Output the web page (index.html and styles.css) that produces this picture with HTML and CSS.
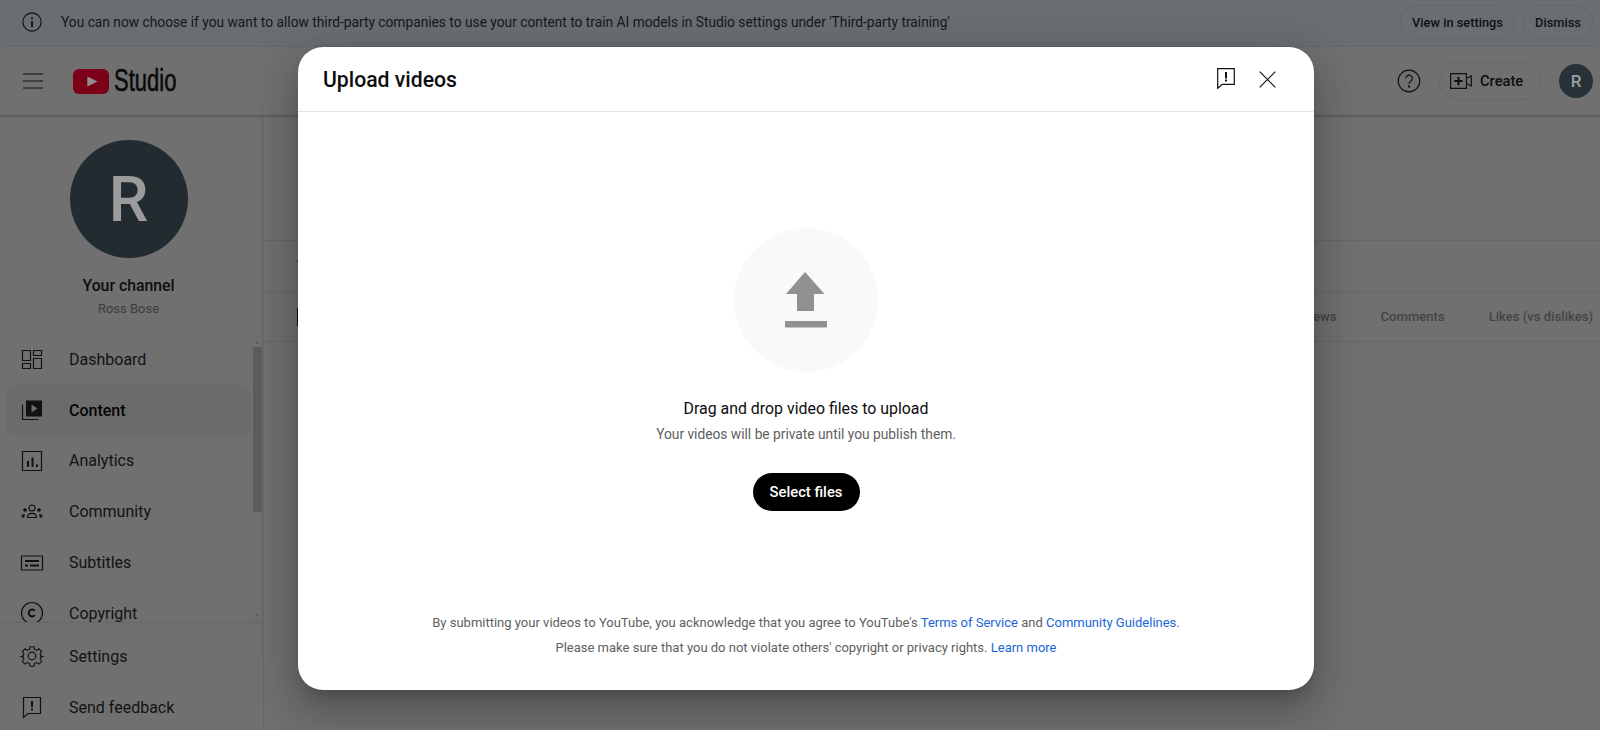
FILE: index.html
```html
<!DOCTYPE html>
<html lang="en">
<head>
<meta charset="utf-8">
<title>Channel content - YouTube Studio</title>
<link rel="stylesheet" href="styles.css">
</head>
<body>
<div class="page">
  <div class="banner">
    <svg class="banner-icon" viewBox="0 0 24 24"><circle cx="12" cy="12" r="10" class="line"/><path d="M11 11h2v6.500h-2zM11 7h2v2h-2z" class="solid"/></svg>
    <p class="banner-text">You can now choose if you want to allow third-party companies to use your content to train AI models in Studio settings under 'Third-party training'</p>
    <button class="pill banner-view">View in settings</button>
    <button class="pill banner-dismiss">Dismiss</button>
  </div>

  <header class="topbar">
    <svg class="menu-icon" viewBox="0 0 20 16"><path d="M0 1h20M0 8h20M0 15h20" class="line"/></svg>
    <svg class="logo-mark" viewBox="0 0 36 25"><rect width="36" height="25" rx="6" fill="#7c0018"/><path d="M14.300 7.500 24.500 12.500 14.300 17.500z" fill="#8f8f8f"/></svg>
    <span class="logo-text">Studio</span>
    <span class="spacer"></span>
    <svg class="help-icon" viewBox="0 0 24 24"><circle cx="12" cy="12" r="10.800" class="line"/><path d="M8.700 9.400a3.300 3.300 0 1 1 5.300 2.700c-1.200.9-2 1.500-2 3" class="line"/><path d="M11 16.600h2v2h-2z" class="solid"/></svg>
    <button class="create">
      <svg class="create-icon" viewBox="0 0 22 16"><path d="M.6.600h15.800v14.800H.6zM16.400 5.500l4.900-2.500v10l-4.900-2.500" class="line"/><path d="M8.500 3.800v8.400M4.300 8h8.400" class="line thick"/></svg>
      <span>Create</span>
    </button>
    <span class="avatar-small">R</span>
  </header>

  <div class="body">
    <aside class="sidebar">
      <div class="channel">
        <div class="avatar-large">R</div>
        <div class="channel-title">Your channel</div>
        <div class="channel-name">Ross Bose</div>
      </div>
      <nav class="nav">
        <a class="nav-item">
          <svg class="nav-icon" viewBox="0 0 24 24"><path d="M2.500 3.500h8v10h-8zM2.500 16.500h8v5h-8zM13.500 3.500h8v5h-8zM13.500 11.500h8v10h-8z" class="line"/></svg>
          Dashboard
        </a>
        <a class="nav-item active">
          <svg class="nav-icon" viewBox="0 0 24 24"><path d="M6 2.500h16v16H6z" class="solid"/><path d="M11.500 6.500l6 4-6 4z" fill="#6b6b6b"/><path d="M2.500 6.500v15h16" class="line"/></svg>
          Content
        </a>
        <a class="nav-item">
          <svg class="nav-icon" viewBox="0 0 24 24"><path d="M2.500 2.500h19v19h-19z" class="line"/><path d="M7 12h2v6H7zM11.500 8.500h2V18h-2zM16 15.500h2V18h-2z" class="solid"/></svg>
          Analytics
        </a>
        <a class="nav-item">
          <svg class="nav-icon" viewBox="0 0 24 24"><circle cx="12" cy="8" r="3" class="line"/><path d="M7.500 17.500c0-3 2-4.200 4.500-4.200s4.500 1.200 4.500 4.200z" class="line"/><circle cx="5" cy="10" r="1.800" class="solid"/><circle cx="19" cy="10" r="1.800" class="solid"/><path d="M1.500 17.500c0-2.500 1-3.500 3.500-3.500l-.8 3.500zM22.500 17.500c0-2.500-1-3.500-3.500-3.500l.8 3.500z" class="solid"/></svg>
          Community
        </a>
        <a class="nav-item">
          <svg class="nav-icon" viewBox="0 0 24 24"><path d="M1.500 5h21v14h-21z" class="line"/><path d="M5 10h14M5 14.500h3M10 14.500h9" class="line thick"/></svg>
          Subtitles
        </a>
        <a class="nav-item">
          <svg class="nav-icon" viewBox="0 0 24 24"><circle cx="12" cy="12" r="10.500" class="line"/><path d="M14.800 9.800a3.400 3.400 0 1 0 0 4.400" class="line thick"/></svg>
          Copyright
        </a>
      </nav>
      <div class="scroll-up"></div>
      <div class="scroll-thumb"></div>
      <div class="scroll-down"></div>
      <div class="nav-bottom">
        <a class="nav-item">
          <svg class="nav-icon" viewBox="0 0 24 24"><circle cx="12" cy="12" r="3.800" class="line"/><path d="M9.800 1.700h4.400l.6 3 2.200 1 2.700-1.700 3 3.100-1.700 2.600.9 2.200 3 .6v0l-3 .6-.9 2.200 1.700 2.600-3 3.100-2.700-1.700-2.200 1-.6 3H9.800l-.6-3-2.200-1-2.700 1.700-3-3.100 1.700-2.600-.9-2.200-3-.6v0l3-.6.900-2.200-1.700-2.600 3-3.100 2.700 1.700 2.200-1z" transform="translate(1.200 1.200) scale(.9)" class="line"/></svg>
          Settings
        </a>
        <a class="nav-item">
          <svg class="nav-icon" viewBox="0 0 24 24"><path d="M3.500 2.500h17v16H8L3.500 22.500z" class="line"/><path d="M11 6h2v6h-2zM11 13.500h2v2h-2z" class="solid"/></svg>
          Send feedback
        </a>
      </div>
    </aside>

    <main class="content">
      <div class="content-head"></div>
      <div class="tabs"><span class="tab">Videos</span></div>
      <div class="table-head">
        <span class="checkbox"></span>
        <span class="spacer"></span>
        <span class="col">Views</span>
        <span class="col">Comments</span>
        <span class="col">Likes (vs dislikes)</span>
      </div>
    </main>
  </div>
</div>

<section class="dialog">
  <div class="dialog-head">
    <h1 class="dialog-title">Upload videos</h1>
    <svg class="dialog-feedback" viewBox="0 0 18 21"><path d="M.7.700h16.600v15.600H5.300L.7 20.300z" class="line"/><path d="M8 4h2v6.500H8zM8 11.500h2v2H8z" class="solid"/></svg>
    <svg class="dialog-close" viewBox="0 0 17 17"><path d="M.7.700l15.600 15.600M16.300.700 .7 16.300" class="line"/></svg>
  </div>
  <div class="dialog-body">
    <div class="upload-circle">
      <svg class="upload-arrow" viewBox="0 0 42 56"><path d="M20 0 39.500 22H29v17H12V22H1z" fill="#909090"/><path d="M0 49h42v6.500H0z" fill="#909090"/></svg>
    </div>
    <p class="upload-title">Drag and drop video files to upload</p>
    <p class="upload-sub">Your videos will be private until you publish them.</p>
    <button class="select-files">Select files</button>
  </div>
  <div class="dialog-foot">
    <p>By submitting your videos to YouTube, you acknowledge that you agree to YouTube's <a>Terms of Service</a> and <a>Community Guidelines</a>.</p>
    <p>Please make sure that you do not violate others' copyright or privacy rights. <a>Learn more</a></p>
  </div>
</section>
</body>
</html>
```

FILE: styles.css
```css
* { box-sizing: border-box; }
html, body { margin: 0; height: 730px; overflow: hidden; }
body { font-family: Roboto, "Liberation Sans", sans-serif; background: #707070; color: #0d0d0d; position: relative; }
p, h1 { margin: 0; }
button { font-family: inherit; margin: 0; }

.line { fill: none; stroke: #111; stroke-width: 1.200; }
.line.thick { stroke-width: 2; }
.solid { fill: #111; }
.spacer { flex: 1; }

.page { height: 730px; display: flex; flex-direction: column; }

.banner { height: 47px; flex: none; display: flex; align-items: center; background: #696e72; padding: 0 7px 3px 21px; }
.banner-icon { width: 22px; height: 22px; flex: none; }
.banner-text { flex: 1; margin-left: 18px; font-size: 13.750px; color: #15181a; white-space: nowrap; }
.pill { background: transparent; border: 1px solid #62676b; border-radius: 17px; height: 34px; padding: 0; font-size: 12.800px; font-weight: 500; color: #111; }
.banner-view { width: 115px; }
.banner-dismiss { width: 70px; margin-left: 8px; }

.topbar { height: 68px; flex: none; display: flex; align-items: center; background: #707070; padding: 0 7px 0 23px; box-shadow: 0 1px 3px rgba(0,0,0,.28); position: relative; }
.menu-icon { width: 20px; height: 16px; flex: none; }
.logo-mark { width: 36px; height: 25px; margin-left: 30px; flex: none; }
.logo-text { margin-left: 5px; font-family: "Liberation Sans", sans-serif; font-size: 31px; line-height: 32px; color: #0a0a0a; transform: scaleX(.71); transform-origin: left center; -webkit-text-stroke: .6px #0a0a0a; }
.help-icon { width: 24px; height: 24px; flex: none; }
.create { display: flex; align-items: center; width: 102px; height: 38px; margin-left: 18px; padding: 0 0 0 10px; background: transparent; border: 1px solid #686868; border-radius: 19px; font-size: 14.700px; font-weight: 500; color: #0d0d0d; }
.create-icon { width: 22px; height: 16px; margin-right: 8px; flex: none; }
.avatar-small { width: 34px; height: 34px; margin-left: 18px; flex: none; border-radius: 50%; background: #263238; color: #a0a0a0; display: flex; align-items: center; justify-content: center; font-size: 17px; font-weight: 500; }

.body { flex: 1; display: flex; min-height: 0; }

.sidebar { width: 264px; flex: none; border-right: 1px solid #676767; position: relative; display: flex; flex-direction: column; height: 616px; }
.channel { flex: none; height: 219px; display: flex; flex-direction: column; align-items: center; padding: 25px 6px 0 0; }
.avatar-large { width: 118px; height: 118px; border-radius: 50%; background: #222b30; color: #9b9b9b; font-size: 63px; font-weight: 500; display: flex; align-items: center; justify-content: center; }
.channel-title { margin-top: 18px; font-size: 15.800px; font-weight: 500; line-height: 20px; color: #0d0d0d; }
.channel-name { margin-top: 5px; font-size: 13px; line-height: 16px; color: #3d3d3d; }

.nav { height: 288px; flex: none; overflow: hidden; }
.nav-bottom { flex: 1; border-top: 1px solid #676767; padding-top: 8px; }
.nav-item { display: flex; align-items: center; height: 50.800px; margin: 0 12px 0 6px; padding-left: 14px; font-size: 16px; color: #121212; border-radius: 10px; }
.nav-item.active { background: #6b6b6b; font-weight: 500; color: #050505; }
.nav-icon { width: 24px; height: 24px; margin-right: 25px; flex: none; }

.scroll-thumb { position: absolute; top: 232px; left: 253px; width: 9px; height: 165px; background: #5c5c5c; }
.scroll-up, .scroll-down { position: absolute; left: 255px; width: 0; height: 0; border-left: 2.500px solid transparent; border-right: 2.500px solid transparent; }
.scroll-up { top: 226px; border-bottom: 3px solid #5f5f5f; }
.scroll-down { top: 499px; border-top: 3px solid #5f5f5f; }

.content { flex: 1; min-width: 0; display: flex; flex-direction: column; }
.content-head { height: 126px; flex: none; border-bottom: 1px solid #676767; }
.tabs { height: 51px; flex: none; border-bottom: 1px solid #676767; padding-left: 33px; display: flex; align-items: center; font-size: 14px; font-weight: 500; }
.table-head { height: 50px; flex: none; border-bottom: 1px solid #676767; display: flex; align-items: center; gap: 44px; padding: 0 7px 0 33px; font-size: 13.100px; font-weight: 500; color: #444; }
.checkbox { width: 18px; height: 18px; border: 2px solid #111; flex: none; }
.col { white-space: nowrap; }

.dialog { position: absolute; left: 298px; top: 47px; width: 1016px; height: 643px; background: #fff; border-radius: 25px; display: flex; flex-direction: column; box-shadow: 0 11px 15px -7px rgba(0,0,0,.2), 0 24px 38px 3px rgba(0,0,0,.14), 0 9px 46px 8px rgba(0,0,0,.12); }
.dialog-head { height: 65px; flex: none; display: flex; align-items: center; border-bottom: 1px solid #e5e5e5; padding: 0 38px 0 25px; }
.dialog-title { flex: 1; font-size: 21.200px; font-weight: 500; color: #0d0d0d; }
.dialog-feedback { width: 18px; height: 21px; flex: none; margin: 0 24px 1px 0; }
.dialog-close { width: 17px; height: 17px; flex: none; }

.dialog-body { flex: 1; display: flex; flex-direction: column; align-items: center; padding-top: 116px; }
.upload-circle { width: 144px; height: 144px; border-radius: 50%; background: #f9f9f9; display: flex; align-items: center; justify-content: center; }
.upload-arrow { width: 42px; height: 56px; }
.upload-title { margin-top: 27px; font-size: 15.900px; line-height: 20px; color: #0d0d0d; }
.upload-sub { margin-top: 6px; font-size: 13.750px; line-height: 18px; color: #606060; }
.select-files { margin-top: 30px; width: 107px; height: 38px; border: 0; border-radius: 19px; background: #000; color: #fff; font-size: 14.800px; font-weight: 500; }

.dialog-foot { flex: none; padding-bottom: 30px; text-align: center; font-size: 13px; line-height: 25px; color: #606060; }
.dialog-foot a { color: #1a66d8; }
```
